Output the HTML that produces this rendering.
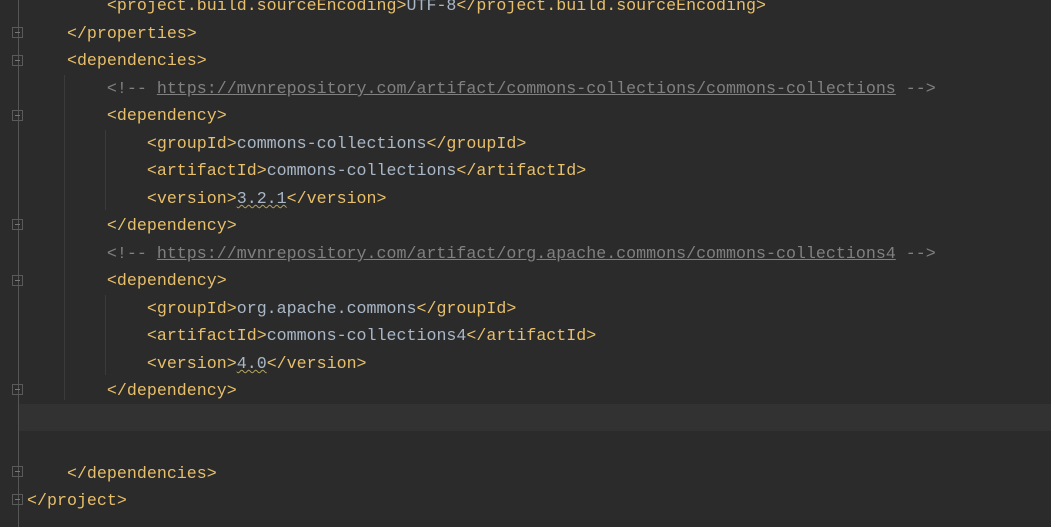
<!DOCTYPE html>
<html><head><style>
body{margin:0;width:1051px;height:527px;background:#2b2b2b;overflow:hidden;position:relative;font-family:"Liberation Mono",monospace;font-size:16.65px}
.l{position:absolute;left:27px;height:27.5px;line-height:27.5px;white-space:pre;color:#a9b7c6}
.t{color:#e8bf6a}.c{color:#808080}.u{text-decoration:underline}.w{text-decoration:underline wavy #b4a460;text-decoration-thickness:1px}
.g{position:absolute;width:1px;background:#3b3b3b}
.f{position:absolute;left:12px;width:11px;height:11px;border:1px solid #5a5a5a;box-sizing:border-box}
.f:after{content:"";position:absolute;left:2px;top:4px;width:5px;height:1px;background:#777}
</style></head><body>
<div style="position:absolute;left:18px;top:0;width:1px;height:527px;background:#555"></div>
<div style="position:absolute;left:19px;top:404px;width:1032px;height:27px;background:#323232"></div>
<div class="g" style="left:64px;top:75px;height:325px"></div>
<div class="g" style="left:105px;top:130px;height:80px"></div>
<div class="g" style="left:105px;top:295px;height:80px"></div>
<div class="l" style="top:-8px">        <span class="t">&lt;project.build.sourceEncoding&gt;</span>UTF-8<span class="t">&lt;/project.build.sourceEncoding&gt;</span></div>
<div class="l" style="top:20px">    <span class="t">&lt;/properties&gt;</span></div>
<div class="l" style="top:47px">    <span class="t">&lt;dependencies&gt;</span></div>
<div class="l" style="top:75px"><span class="c">        &lt;!-- <span class="u">https://mvnrepository.com/artifact/commons-collections/commons-collections</span> --&gt;</span></div>
<div class="l" style="top:102px">        <span class="t">&lt;dependency&gt;</span></div>
<div class="l" style="top:130px">            <span class="t">&lt;groupId&gt;</span>commons-collections<span class="t">&lt;/groupId&gt;</span></div>
<div class="l" style="top:157px">            <span class="t">&lt;artifactId&gt;</span>commons-collections<span class="t">&lt;/artifactId&gt;</span></div>
<div class="l" style="top:185px">            <span class="t">&lt;version&gt;</span><span class="w">3.2.1</span><span class="t">&lt;/version&gt;</span></div>
<div class="l" style="top:212px">        <span class="t">&lt;/dependency&gt;</span></div>
<div class="l" style="top:240px"><span class="c">        &lt;!-- <span class="u">https://mvnrepository.com/artifact/org.apache.commons/commons-collections4</span> --&gt;</span></div>
<div class="l" style="top:267px">        <span class="t">&lt;dependency&gt;</span></div>
<div class="l" style="top:295px">            <span class="t">&lt;groupId&gt;</span>org.apache.commons<span class="t">&lt;/groupId&gt;</span></div>
<div class="l" style="top:322px">            <span class="t">&lt;artifactId&gt;</span>commons-collections4<span class="t">&lt;/artifactId&gt;</span></div>
<div class="l" style="top:350px">            <span class="t">&lt;version&gt;</span><span class="w">4.0</span><span class="t">&lt;/version&gt;</span></div>
<div class="l" style="top:377px">        <span class="t">&lt;/dependency&gt;</span></div>
<div class="l" style="top:460px">    <span class="t">&lt;/dependencies&gt;</span></div>
<div class="l" style="top:487px"><span class="t">&lt;/project&gt;</span></div>
<div class="f" style="top:27px"></div>
<div class="f" style="top:55px"></div>
<div class="f" style="top:110px"></div>
<div class="f" style="top:219px"></div>
<div class="f" style="top:275px"></div>
<div class="f" style="top:384px"></div>
<div class="f" style="top:466px"></div>
<div class="f" style="top:494px"></div>
</body></html>
